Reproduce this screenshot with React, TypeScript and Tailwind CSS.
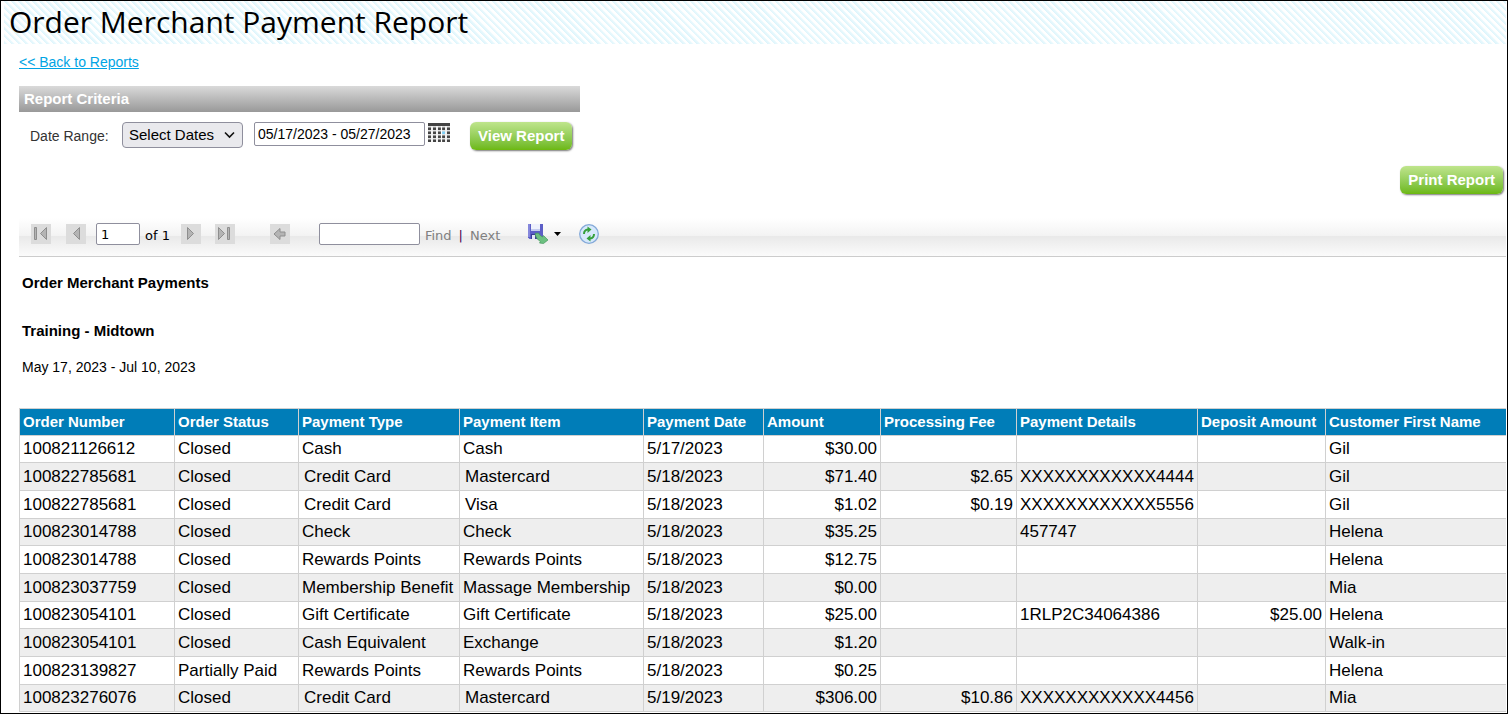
import { useState } from 'react';

interface Payment {
  order: string;
  status: string;
  type: string;
  item: string;
  date: string;
  amount: string;
  fee?: string;
  details?: string;
  deposit?: string;
  customer: string;
}

const payments: Payment[] = [
  { order: '100821126612', status: 'Closed', type: 'Cash', item: 'Cash', date: '5/17/2023', amount: '$30.00', customer: 'Gil' },
  { order: '100822785681', status: 'Closed', type: 'Credit Card', item: 'Mastercard', date: '5/18/2023', amount: '$71.40', fee: '$2.65', details: 'XXXXXXXXXXXX4444', customer: 'Gil' },
  { order: '100822785681', status: 'Closed', type: 'Credit Card', item: 'Visa', date: '5/18/2023', amount: '$1.02', fee: '$0.19', details: 'XXXXXXXXXXXX5556', customer: 'Gil' },
  { order: '100823014788', status: 'Closed', type: 'Check', item: 'Check', date: '5/18/2023', amount: '$35.25', details: '457747', customer: 'Helena' },
  { order: '100823014788', status: 'Closed', type: 'Rewards Points', item: 'Rewards Points', date: '5/18/2023', amount: '$12.75', customer: 'Helena' },
  { order: '100823037759', status: 'Closed', type: 'Membership Benefit', item: 'Massage Membership', date: '5/18/2023', amount: '$0.00', customer: 'Mia' },
  { order: '100823054101', status: 'Closed', type: 'Gift Certificate', item: 'Gift Certificate', date: '5/18/2023', amount: '$25.00', details: '1RLP2C34064386', deposit: '$25.00', customer: 'Helena' },
  { order: '100823054101', status: 'Closed', type: 'Cash Equivalent', item: 'Exchange', date: '5/18/2023', amount: '$1.20', customer: 'Walk-in' },
  { order: '100823139827', status: 'Partially Paid', type: 'Rewards Points', item: 'Rewards Points', date: '5/18/2023', amount: '$0.25', customer: 'Helena' },
  { order: '100823276076', status: 'Closed', type: 'Credit Card', item: 'Mastercard', date: '5/19/2023', amount: '$306.00', fee: '$10.86', details: 'XXXXXXXXXXXX4456', customer: 'Mia' },
];

// The last column takes whatever width is left
const columns = [
  { label: 'Order Number', width: 'w-[155px]' },
  { label: 'Order Status', width: 'w-[124px]' },
  { label: 'Payment Type', width: 'w-[161px]' },
  { label: 'Payment Item', width: 'w-[184px]' },
  { label: 'Payment Date', width: 'w-[120px]' },
  { label: 'Amount', width: 'w-[117px]' },
  { label: 'Processing Fee', width: 'w-[136px]' },
  { label: 'Payment Details', width: 'w-[181px]' },
  { label: 'Deposit Amount', width: 'w-[128px]' },
  { label: 'Customer First Name', width: '' },
];

const greenButton =
  'h-7 rounded-md bg-linear-to-b from-[#bfe58c] to-[#6cb80c] px-2 text-[15px] font-bold whitespace-nowrap text-white shadow-[1px_1px_2px_#777]';

const cell = 'border border-[#d0d0d0] px-[3px] py-0 whitespace-nowrap';

function CalendarIcon() {
  return (
    <svg width="22" height="20" viewBox="0 0 22 20" aria-hidden="true">
      <rect width="22" height="3" fill="#444" />
      <rect y="3" width="22" height="16" fill="#ddd" />
      {[5, 9, 13, 17].map((y) =>
        [0, 5, 10, 14, 19].map((x) => (
          <rect
            key={`${x}-${y}`}
            x={x}
            y={y - 0.5}
            width="3"
            height="2.500"
            fill={x === 14 && y === 9 ? '#7fd0f7' : '#444'}
          />
        ))
      )}
      <path d="M4 3v16M9 3v16M13.500 3v16M18 3v16" stroke="#fff" strokeWidth="1.200" />
    </svg>
  );
}

function NavButton({ label, children }: { label: string; children: React.ReactNode }) {
  return (
    <button type="button" aria-label={label} className="size-5 bg-[#dcdcdc]">
      <svg width="20" height="20" viewBox="0 0 20 20" fill="#b4b4b4" stroke="#8e8e8e" aria-hidden="true">
        {children}
      </svg>
    </button>
  );
}

function SaveIcon() {
  return (
    <svg width="20" height="20" viewBox="0 0 20 20" aria-hidden="true">
      <path d="M0 0h15v15H1.500L0 13.500z" fill="#5c5ec6" />
      <path d="M0 0h2v13H0z" fill="#8587dc" />
      <rect x="3" y="0" width="9" height="7" fill="#eef1fc" />
      <rect x="3" y="5" width="9" height="2" fill="#c5cdf0" />
      <rect x="3" y="10" width="8" height="5" fill="#3c3e96" />
      <rect x="4" y="11" width="3" height="4" fill="#e4e6f8" />
      <path
        d="M7 9.500l3.500-.5c1 2 2.500 3.500 4.500 4l.5-1.500L20 16l-4.500 3.500-4-.5 1-1.500c-3-1.500-5-4.500-5.500-8z"
        fill="#6cc080"
        stroke="#459a5b"
        strokeWidth=".7"
      />
    </svg>
  );
}

function RefreshIcon() {
  return (
    <svg width="20" height="20" viewBox="0 0 20 20" aria-hidden="true">
      <circle cx="10" cy="10" r="9.300" fill="#d6e8fb" stroke="#83a9d8" strokeWidth="1.300" />
      <g fill="none" stroke="#35a03c" strokeWidth="2">
        <path d="M5 10c0-2.500 1.500-4.200 4-4.500" />
        <path d="M15 10c0 2.500-1.500 4.200-4 4.500" />
      </g>
      <path d="M8.500 2.500l4 3-4 3.500zM11.500 17.500l-4-3 4-3.500z" fill="#35a03c" />
    </svg>
  );
}

function Criteria() {
  const [dates, setDates] = useState('05/17/2023 - 05/27/2023');

  return (
    <section className="max-w-[561px]">
      <h2 className="h-[26px] bg-linear-to-b from-[#dadada] to-[#999] px-[5px] text-[15px] leading-[26px] font-bold text-white">
        Report Criteria
      </h2>
      <div className="flex items-start pt-[10px] pl-[11px]">
        <label htmlFor="range" className="w-[92px] pt-1 text-sm leading-5 text-[#333]">
          Date Range:
        </label>
        <div className="relative">
          <select
            id="range"
            className="h-[26px] w-[121px] appearance-none rounded-[4px] border border-[#8f8f9d] bg-[#e9e9ed] pl-1.5 text-[15px] leading-6"
          >
            <option>Select Dates</option>
          </select>
          <svg
            className="pointer-events-none absolute top-[9px] right-2"
            width="11"
            height="8"
            viewBox="0 0 11 8"
            fill="none"
            stroke="#111"
            strokeWidth="1.600"
            aria-hidden="true"
          >
            <path d="M1 1.500l4.500 4.500L10 1.500" />
          </svg>
        </div>
        <input
          aria-label="Dates"
          value={dates}
          onChange={(e) => setDates(e.target.value)}
          className="ml-[11px] h-6 w-[171px] rounded-[2px] border border-[#8f8f9d] bg-white px-[3px] text-sm"
        />
        <button type="button" aria-label="Open calendar" className="ml-[3px] pt-px">
          <CalendarIcon />
        </button>
        <button type="button" className={`ml-5 ${greenButton}`}>
          View Report
        </button>
      </div>
    </section>
  );
}

function Toolbar() {
  const [page, setPage] = useState('1');
  const [query, setQuery] = useState('');

  return (
    <div className="flex h-[39px] items-center border-b border-[#ccc] bg-[linear-gradient(#fff,#f3f3f3_47%,#e9e9e9_48%,#fbfbfb)] pb-1.5 pl-3 font-['DejaVu_Sans','Verdana',sans-serif] text-[13px]">
      <NavButton label="First page">
        <path d="M3.500 3.500h2v12h-2zM15.500 3.500v12l-6-6z" />
      </NavButton>
      <div className="w-[15px]" />
      <NavButton label="Previous page">
        <path d="M13.500 3.500v12l-6-6z" />
      </NavButton>
      <input
        aria-label="Page"
        value={page}
        onChange={(e) => setPage(e.target.value)}
        className="ml-2.5 h-[22px] w-11 rounded-[2px] border border-[#8f8f9d] bg-white px-1"
      />
      <span className="mr-[11px] ml-[5px] pt-1">of 1</span>
      <NavButton label="Next page">
        <path d="M6.500 3.500v12l6-6z" />
      </NavButton>
      <div className="w-3.5" />
      <NavButton label="Last page">
        <path d="M3.500 3.500v12l6-6zM12.500 3.500h2v12h-2z" />
      </NavButton>
      <div className="w-[35px]" />
      <NavButton label="Back to parent report">
        <path d="M4 10l6-5.500v3.500h5v4h-5v3.500z" />
      </NavButton>
      <input
        aria-label="Find text"
        value={query}
        onChange={(e) => setQuery(e.target.value)}
        className="ml-[29px] h-[22px] w-[101px] rounded-[2px] border border-[#8f8f9d] bg-white px-1"
      />
      <div className="ml-[5px] flex gap-[7px] pt-1 text-[#808080]">
        <a href="#find">Find</a>
        <span className="text-[#4b0050]">|</span>
        <a href="#next">Next</a>
      </div>
      <button type="button" aria-label="Export" className="ml-7 flex items-center gap-1.5">
        <SaveIcon />
        <svg width="7" height="4" viewBox="0 0 7 4" aria-hidden="true">
          <path d="M0 0h7L3.500 4z" />
        </svg>
      </button>
      <button type="button" aria-label="Refresh" className="ml-[18px]">
        <RefreshIcon />
      </button>
    </div>
  );
}

function PaymentsTable() {
  return (
    <table className="w-full table-fixed border-collapse text-left text-[17px] leading-5">
      <thead>
        <tr className="h-[27px] bg-[#007db8] text-[15px] text-white">
          {columns.map((col) => (
            <th key={col.label} className={`${cell} ${col.width} font-bold last:border-r-0`}>
              {col.label}
            </th>
          ))}
        </tr>
      </thead>
      <tbody>
        {payments.map((p, i) => {
          // Card payments are indented a little
          const indent = p.type === 'Credit Card' ? 'pl-[5px]' : '';

          return (
            <tr key={i} className="h-7 even:bg-[#eee] nth-[3n+1]:h-[27px]">
              <td className={cell}>{p.order}</td>
              <td className={cell}>{p.status}</td>
              <td className={`${cell} ${indent}`}>{p.type}</td>
              <td className={`${cell} ${indent}`}>{p.item}</td>
              <td className={cell}>{p.date}</td>
              <td className={`${cell} text-right`}>{p.amount}</td>
              <td className={`${cell} text-right`}>{p.fee}</td>
              <td className={cell}>{p.details}</td>
              <td className={`${cell} text-right`}>{p.deposit}</td>
              <td className={`${cell} border-r-0`}>{p.customer}</td>
            </tr>
          );
        })}
      </tbody>
    </table>
  );
}

export default function App() {
  return (
    <div className="min-h-screen border border-black bg-white font-['Liberation_Sans',Arial,sans-serif] text-black">
      <header className="mr-px ml-[3px] bg-[repeating-linear-gradient(45deg,#def5fc_0px,#e9f9fd_2px,#fff_3px,#fff_5px)] px-[5px] pb-0.5">
        <h1 className="font-['Open_Sans',sans-serif] text-[30px] leading-[41px]">
          Order Merchant Payment Report
        </h1>
      </header>
      <main className="pr-px pl-[18px]">
        <a href="#reports" className="mt-2 mb-3.5 inline-block text-sm leading-5 text-[#00a4e4] underline">
          &lt;&lt; Back to Reports
        </a>
        <Criteria />
        <div className="flex justify-end pt-4 pr-[3px]">
          <button type="button" className={greenButton}>
            Print Report
          </button>
        </div>
        <div className="pt-6">
          <Toolbar />
        </div>
        <div className="px-[3px] pt-4 pb-[31px] text-sm leading-5">
          <h2 className="text-[15px] leading-5 font-bold">Order Merchant Payments</h2>
          <h3 className="mt-7 text-[15px] leading-5 font-bold">Training - Midtown</h3>
          <p className="mt-4">May 17, 2023 - Jul 10, 2023</p>
        </div>
        <PaymentsTable />
      </main>
    </div>
  );
}
